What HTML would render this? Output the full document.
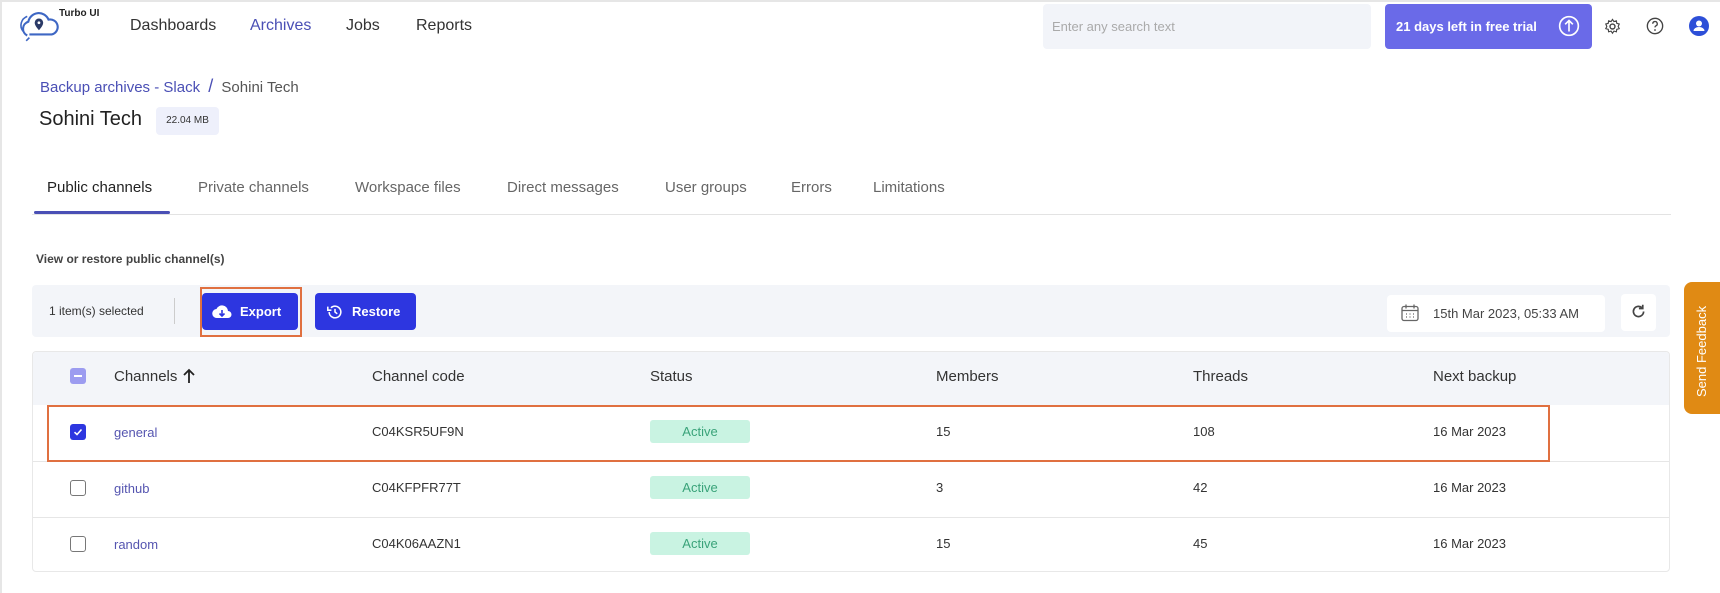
<!DOCTYPE html>
<html><head><meta charset="utf-8"><style>
*{box-sizing:border-box;margin:0;padding:0}
body{width:1720px;height:593px;background:#fff;font-family:"Liberation Sans",sans-serif;position:relative;overflow:hidden;color:#333;border-top:2px solid #e6e6e6;border-left:2px solid #e6e6e6}
.a{position:absolute;white-space:nowrap}
.nav{font-size:16px;color:#333;top:15px}
.tab{font-size:15px;color:#666;top:177px}
.th{font-size:15px;color:#333;top:366px}
.td{font-size:13px;color:#333}
.badge{position:absolute;left:648px;width:100px;height:23px;background:#c9f3e2;border-radius:3px;color:#3aa37a;font-size:13px;text-align:center;line-height:23px}
.cb{position:absolute;left:68px;width:16px;height:16px;border:1.5px solid #777;border-radius:3px;background:#fff}
</style></head><body>
<svg class="a" style="left:16px;top:8px" width="44" height="34" viewBox="0 0 40 32"><path d="M8 24a7 7 0 0 1 1-13 10 10 0 0 1 19-2 7 7 0 0 1 3 14H10" fill="none" stroke="#3e67c4" stroke-width="2"/><path d="M4 20a9 9 0 0 1 4-14" fill="none" stroke="#3e67c4" stroke-width="1.5"/><path d="M19 8a4 4 0 0 1 4 4c0 3-4 7-4 7s-4-4-4-7a4 4 0 0 1 4-4z" fill="#2b3a67"/><circle cx="19" cy="12" r="1.3" fill="#fff"/><path d="M10 26l-3 3" stroke="#3e67c4" stroke-width="1.5"/></svg>
<div class="a" style="left:57px;top:6px;font-size:10px;font-weight:bold;color:#222">Turbo UI</div>
<div class="a nav" style="left:128px">Dashboards</div>
<div class="a nav" style="left:248px;color:#4a4fb5">Archives</div>
<div class="a nav" style="left:344px">Jobs</div>
<div class="a nav" style="left:414px">Reports</div>
<div class="a" style="left:1041px;top:2px;width:328px;height:45px;background:#f2f4f9;border-radius:4px;font-size:13px;color:#aaa;line-height:45px;padding-left:9px">Enter any search text</div>
<div class="a" style="left:1383px;top:2px;width:207px;height:45px;background:#6a6ae8;border-radius:4px;color:#fff;font-size:13px;font-weight:bold;line-height:45px;padding-left:11px">21 days left in free trial</div>
<svg class="a" style="left:1556px;top:13px" width="22" height="22" viewBox="0 0 20 20"><circle cx="10" cy="10" r="8.5" fill="none" stroke="#fff" stroke-width="1.5"/><path d="M10 15V5M6.5 8.5 10 5l3.5 3.5" fill="none" stroke="#fff" stroke-width="1.5"/></svg>
<svg class="a" style="left:1602px;top:16px" width="17" height="17" viewBox="0 0 24 24"><circle cx="12" cy="12" r="3.5" fill="none" stroke="#444" stroke-width="2"/><path d="M12 2l2 3 3.5-1 .5 3.5 3.5 1-1.5 3.5 1.5 3-3.5 1-.5 3.5-3.5-1-2 3-2-3-3.5 1-.5-3.5-3.5-1 1.5-3-1.5-3.5 3.5-1L6.5 4 10 5z" fill="none" stroke="#444" stroke-width="1.6"/></svg>
<svg class="a" style="left:1644px;top:15px" width="18" height="18" viewBox="0 0 20 20"><circle cx="10" cy="10" r="8.5" fill="none" stroke="#444" stroke-width="1.5"/><path d="M7.5 7.5a2.5 2.5 0 1 1 3.5 2.3c-.7.4-1 .9-1 1.7" fill="none" stroke="#444" stroke-width="1.5"/><circle cx="10" cy="14.5" r="1" fill="#444"/></svg>
<svg class="a" style="left:1686px;top:13px" width="22" height="22" viewBox="0 0 22 22"><circle cx="11" cy="11" r="10" fill="#2d4fd8"/><circle cx="11" cy="8.5" r="3" fill="#fff"/><path d="M5.5 16a5.5 4 0 0 1 11 0z" fill="#fff"/></svg>
<div class="a" style="left:38px;top:74px;font-size:15px;color:#4a4fb5">Backup archives - Slack <span style="color:#4a4fb5;font-size:18px;margin:0 4px">/</span> <span style="color:#555">Sohini Tech</span></div>
<div class="a" style="left:37px;top:106px;font-size:20px;color:#222">Sohini Tech</div>
<div class="a" style="left:154px;top:105px;width:63px;height:28px;background:#eef0fb;border-radius:4px;font-size:10px;color:#333;text-align:center;line-height:28px">22.04 MB</div>
<div class="a tab" style="left:45px;color:#222">Public channels</div>
<div class="a tab" style="left:196px">Private channels</div>
<div class="a tab" style="left:353px">Workspace files</div>
<div class="a tab" style="left:505px">Direct messages</div>
<div class="a tab" style="left:663px">User groups</div>
<div class="a tab" style="left:789px">Errors</div>
<div class="a tab" style="left:871px">Limitations</div>
<div class="a" style="left:30px;top:212px;width:1639px;height:1px;background:#e3e3e3"></div>
<div class="a" style="left:32px;top:209px;width:136px;height:3px;background:#4a4fb5;border-radius:2px"></div>
<div class="a" style="left:34px;top:250px;font-size:12px;font-weight:bold;color:#444">View or restore public channel(s)</div>
<div class="a" style="left:30px;top:283px;width:1638px;height:52px;background:#f3f5f9;border-radius:4px"></div>
<div class="a" style="left:47px;top:302px;font-size:12px;color:#333">1 item(s) selected</div>
<div class="a" style="left:172px;top:296px;width:1px;height:26px;background:#ccc"></div>
<div class="a" style="left:198px;top:285px;width:102px;height:50px;border:2.5px solid #e07040"></div>
<div class="a" style="left:200px;top:291px;width:96px;height:37px;background:#2d36e0;border-radius:4px;color:#fff;font-size:13px;font-weight:bold;line-height:37px;padding-left:38px">Export</div>
<svg class="a" style="left:210px;top:302px" width="20" height="16" viewBox="0 0 20 16"><path d="M5 14a4.5 4.5 0 0 1-.5-9 6 6 0 0 1 11.5 2 3.5 3.5 0 0 1 0 7z" fill="#fff"/><path d="M10 6v6M7.5 9.5 10 12l2.5-2.5" stroke="#2d36e0" stroke-width="1.6" fill="none"/></svg>
<div class="a" style="left:313px;top:291px;width:101px;height:37px;background:#2d36e0;border-radius:4px;color:#fff;font-size:13px;font-weight:bold;line-height:37px;padding-left:37px">Restore</div>
<svg class="a" style="left:324px;top:301px" width="18" height="18" viewBox="0 0 20 20"><path d="M3.5 10a6.5 6.5 0 1 0 2-4.7" fill="none" stroke="#fff" stroke-width="1.7"/><path d="M2 4v4h4" fill="none" stroke="#fff" stroke-width="1.7"/><path d="M10 6.5V10l2.5 2" fill="none" stroke="#fff" stroke-width="1.7"/></svg>
<div class="a" style="left:1385px;top:293px;width:218px;height:37px;background:#fff;border-radius:4px;font-size:13px;color:#444;line-height:37px;padding-left:46px">15th Mar 2023, 05:33 AM</div>
<svg class="a" style="left:1398px;top:301px" width="20" height="20" viewBox="0 0 20 20"><rect x="2" y="3.5" width="16" height="14" rx="2" fill="none" stroke="#666" stroke-width="1.3"/><path d="M2 7.5h16M6 1.5v4M14 1.5v4" stroke="#666" stroke-width="1.3"/><path d="M6 11h1M9.5 11h1M13 11h1M6 14h1M9.5 14h1M13 14h1" stroke="#666" stroke-width="1.2"/></svg>
<div class="a" style="left:1619px;top:292px;width:35px;height:37px;background:#fff;border-radius:4px"></div>
<svg class="a" style="left:1628px;top:301px" width="17" height="17" viewBox="0 0 20 20"><path d="M16 10a6 6 0 1 1-2-4.5" fill="none" stroke="#444" stroke-width="2"/><path d="M15 2v4.5h-4.5" fill="none" stroke="#444" stroke-width="2"/></svg>
<div class="a" style="left:30px;top:349px;width:1638px;height:221px;border:1px solid #e8e8e8;border-radius:4px;overflow:hidden">
<div style="height:53px;background:#f3f5f9"></div>
<div style="position:absolute;top:109px;left:0;right:0;height:1px;background:#e6e6e6"></div>
<div style="position:absolute;top:165px;left:0;right:0;height:1px;background:#e6e6e6"></div>
</div>
<div class="a" style="left:68px;top:366px;width:16px;height:16px;background:#9c9cf0;border-radius:3px"><div style="position:absolute;left:4px;top:7px;width:8px;height:2px;background:#fff"></div></div>
<div class="a th" style="left:112px">Channels</div>
<svg class="a" style="left:180px;top:366px" width="14" height="16" viewBox="0 0 14 16"><path d="M7 15V2M2 7l5-5 5 5" fill="none" stroke="#222" stroke-width="1.8"/></svg>
<div class="a th" style="left:370px">Channel code</div>
<div class="a th" style="left:648px">Status</div>
<div class="a th" style="left:934px">Members</div>
<div class="a th" style="left:1191px">Threads</div>
<div class="a th" style="left:1431px">Next backup</div>
<div class="a" style="left:45px;top:403px;width:1503px;height:57px;border:2.5px solid #e07040"></div>
<div class="a" style="left:68px;top:422px;width:16px;height:16px;background:#2d36e0;border-radius:3px"><svg width="16" height="16" viewBox="0 0 16 16"><path d="M4.5 8.2 7 10.5l4.5-5" fill="none" stroke="#fff" stroke-width="1.6"/></svg></div>
<div class="cb" style="top:478px"></div>
<div class="cb" style="top:534px"></div>
<div class="a td" style="left:112px;top:423px;color:#5555b0">general</div>
<div class="a td" style="left:112px;top:479px;color:#5555b0">github</div>
<div class="a td" style="left:112px;top:535px;color:#5555b0">random</div>
<div class="a td" style="left:370px;top:422px">C04KSR5UF9N</div>
<div class="a td" style="left:370px;top:478px">C04KFPFR77T</div>
<div class="a td" style="left:370px;top:534px">C04K06AAZN1</div>
<div class="badge" style="top:418px">Active</div>
<div class="badge" style="top:474px">Active</div>
<div class="badge" style="top:530px">Active</div>
<div class="a td" style="left:934px;top:422px">15</div>
<div class="a td" style="left:934px;top:478px">3</div>
<div class="a td" style="left:934px;top:534px">15</div>
<div class="a td" style="left:1191px;top:422px">108</div>
<div class="a td" style="left:1191px;top:478px">42</div>
<div class="a td" style="left:1191px;top:534px">45</div>
<div class="a td" style="left:1431px;top:422px">16 Mar 2023</div>
<div class="a td" style="left:1431px;top:478px">16 Mar 2023</div>
<div class="a td" style="left:1431px;top:534px">16 Mar 2023</div>
<div class="a" style="left:1682px;top:280px;width:40px;height:132px;background:#e08a14;border-radius:8px 0 0 8px"></div>
<div class="a" style="left:1692px;top:395px;transform-origin:0 0;transform:rotate(-90deg);font-size:13px;color:#fff">Send Feedback</div>
</body></html>
